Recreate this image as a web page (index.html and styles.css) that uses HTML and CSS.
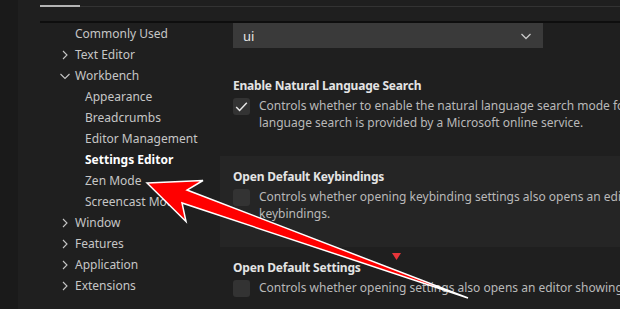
FILE: index.html
```html
<!DOCTYPE html>
<html lang="en">
<head>
    <meta charset="UTF-8">
    <title>Settings</title>
    <link rel="stylesheet" href="styles.css">
</head>
<body>
    <div class="gutter"></div>
    <div class="editor">
        <div class="header">
            <div class="tabline"><div class="tab-active"></div></div>
        </div>
        <div class="columns">
            <div class="toc">
                <div class="toc-item lvl1">Commonly Used</div>
                <div class="toc-item lvl1"><svg class="chev" viewBox="0 0 16 16"><path d="M6 4l4 4-4 4"/></svg>Text Editor</div>
                <div class="toc-item lvl1"><svg class="chev" viewBox="0 0 16 16"><path d="M3.5 6l4.5 4.5 4.5-4.5"/></svg>Workbench</div>
                <div class="toc-item lvl2">Appearance</div>
                <div class="toc-item lvl2">Breadcrumbs</div>
                <div class="toc-item lvl2">Editor Management</div>
                <div class="toc-item lvl2 active">Settings Editor</div>
                <div class="toc-item lvl2">Zen Mode</div>
                <div class="toc-item lvl2">Screencast Mode</div>
                <div class="toc-item lvl1"><svg class="chev" viewBox="0 0 16 16"><path d="M6 4l4 4-4 4"/></svg>Window</div>
                <div class="toc-item lvl1"><svg class="chev" viewBox="0 0 16 16"><path d="M6 4l4 4-4 4"/></svg>Features</div>
                <div class="toc-item lvl1"><svg class="chev" viewBox="0 0 16 16"><path d="M6 4l4 4-4 4"/></svg>Application</div>
                <div class="toc-item lvl1"><svg class="chev" viewBox="0 0 16 16"><path d="M6 4l4 4-4 4"/></svg>Extensions</div>
            </div>
            <div class="settings">
                <div class="select">
                    <span>ui</span>
                    <svg class="select-chev" viewBox="0 0 16 16"><path d="M3.5 6l4.5 4.5 4.5-4.5"/></svg>
                </div>

                <div class="setting">
                    <div class="setting-title">Enable Natural Language Search</div>
                    <div class="setting-row">
                        <div class="checkbox"><svg viewBox="0 0 16 16"><path d="M3 8.5l3.2 3.2L13 4.5"/></svg></div>
                        <div class="setting-desc">Controls whether to enable the natural language search mode for settings. The natural<br>language search is provided by a Microsoft online service.</div>
                    </div>
                </div>

                <div class="setting focused">
                    <div class="setting-title">Open Default Keybindings</div>
                    <div class="setting-row">
                        <div class="checkbox"></div>
                        <div class="setting-desc">Controls whether opening keybinding settings also opens an editor showing all default<br>keybindings.</div>
                    </div>
                </div>

                <div class="setting">
                    <div class="setting-title">Open Default Settings</div>
                    <div class="setting-row">
                        <div class="checkbox"></div>
                        <div class="setting-desc">Controls whether opening settings also opens an editor showing all default settings.</div>
                    </div>
                </div>
            </div>
        </div>
    </div>

    <!-- annotation drawn over the screenshot -->
    <svg class="overlay" viewBox="0 0 620 309">
        <polygon class="arrow" points="147,183 203,180.5 187,190 468,298 182,203 186,221.5"/>
        <polygon class="marker" points="392,253 401,253 396.5,260"/>
    </svg>
</body>
</html>
```

FILE: styles.css
```css
body {
    margin: 0;
    height: 309px;
    overflow: hidden;
    display: flex;
    background-color: #1f1f1f;
    font-family: "Noto Sans", "Open Sans", sans-serif;
    font-size: 12px;
    color: #c6c6c6;
}
.gutter {
    width: 18px;
    background-color: #1a1a1a;
}
.editor {
    flex: 1;
    padding-left: 22px;
    overflow: hidden;
}
.header {
    border-bottom: 2px solid #0e0e0e;
    box-sizing: border-box;
    padding-top: 6px;
    height: 23px;
}
.tabline {
    height: 1px;
    background-color: #333333;
    position: relative;
}
.tab-active {
    position: absolute;
    top: -1px;
    width: 40px;
    height: 2px;
    background-color: #b4b4b4;
}
.columns {
    display: flex;
}
.toc {
    width: 180px;
    flex-shrink: 0;
}
.toc-item {
    height: 21px;
    line-height: 21px;
    white-space: nowrap;
    display: flex;
    align-items: center;
}
.toc-item.lvl1 {
    padding-left: 35px;
    position: relative;
}
.toc-item.lvl2 {
    padding-left: 45px;
}
.toc-item.active {
    color: #ffffff;
    font-weight: bold;
}
.chev {
    position: absolute;
    left: 17px;
    width: 16px;
    height: 16px;
    fill: none;
    stroke: #c6c6c6;
    stroke-width: 1.1;
}
.settings {
    flex: 1;
    min-width: 0;
}
.select {
    margin-left: 13px;
    width: 310px;
    height: 25px;
    box-sizing: border-box;
    padding: 0 9px 0 10px;
    background-color: #3a3a3a;
    color: #e6e6e6;
    font-size: 13px;
    display: flex;
    align-items: center;
    justify-content: space-between;
    margin-bottom: 17px;
}
.select-chev {
    width: 16px;
    height: 16px;
    fill: none;
    stroke: #c8c8c8;
    stroke-width: 1.3;
}
.setting {
    padding: 12px 0 25px 13px;
    white-space: nowrap;
}
.setting.focused {
    background-color: #252525;
}
.setting-title {
    height: 18px;
    line-height: 18px;
    font-weight: bold;
    letter-spacing: -0.2px;
    color: #e4e4e4;
}
.setting-row {
    display: flex;
    gap: 9px;
    margin-top: 2px;
}
.checkbox {
    width: 17px;
    height: 17px;
    margin-top: 1px;
    flex-shrink: 0;
    border-radius: 3px;
    background-color: #333333;
}
.checkbox svg {
    width: 17px;
    height: 17px;
    fill: none;
    stroke: #e8e8e8;
    stroke-width: 1.4;
}
.setting-desc {
    line-height: 17px;
    color: #b9b9b9;
}
.overlay {
    position: absolute;
    top: 0;
    left: 0;
    width: 620px;
    height: 309px;
    pointer-events: none;
}
.arrow {
    fill: #ff0000;
    stroke: #ffffff;
    stroke-width: 1.5;
    stroke-linejoin: miter;
}
.marker {
    fill: #e8353a;
}
```
